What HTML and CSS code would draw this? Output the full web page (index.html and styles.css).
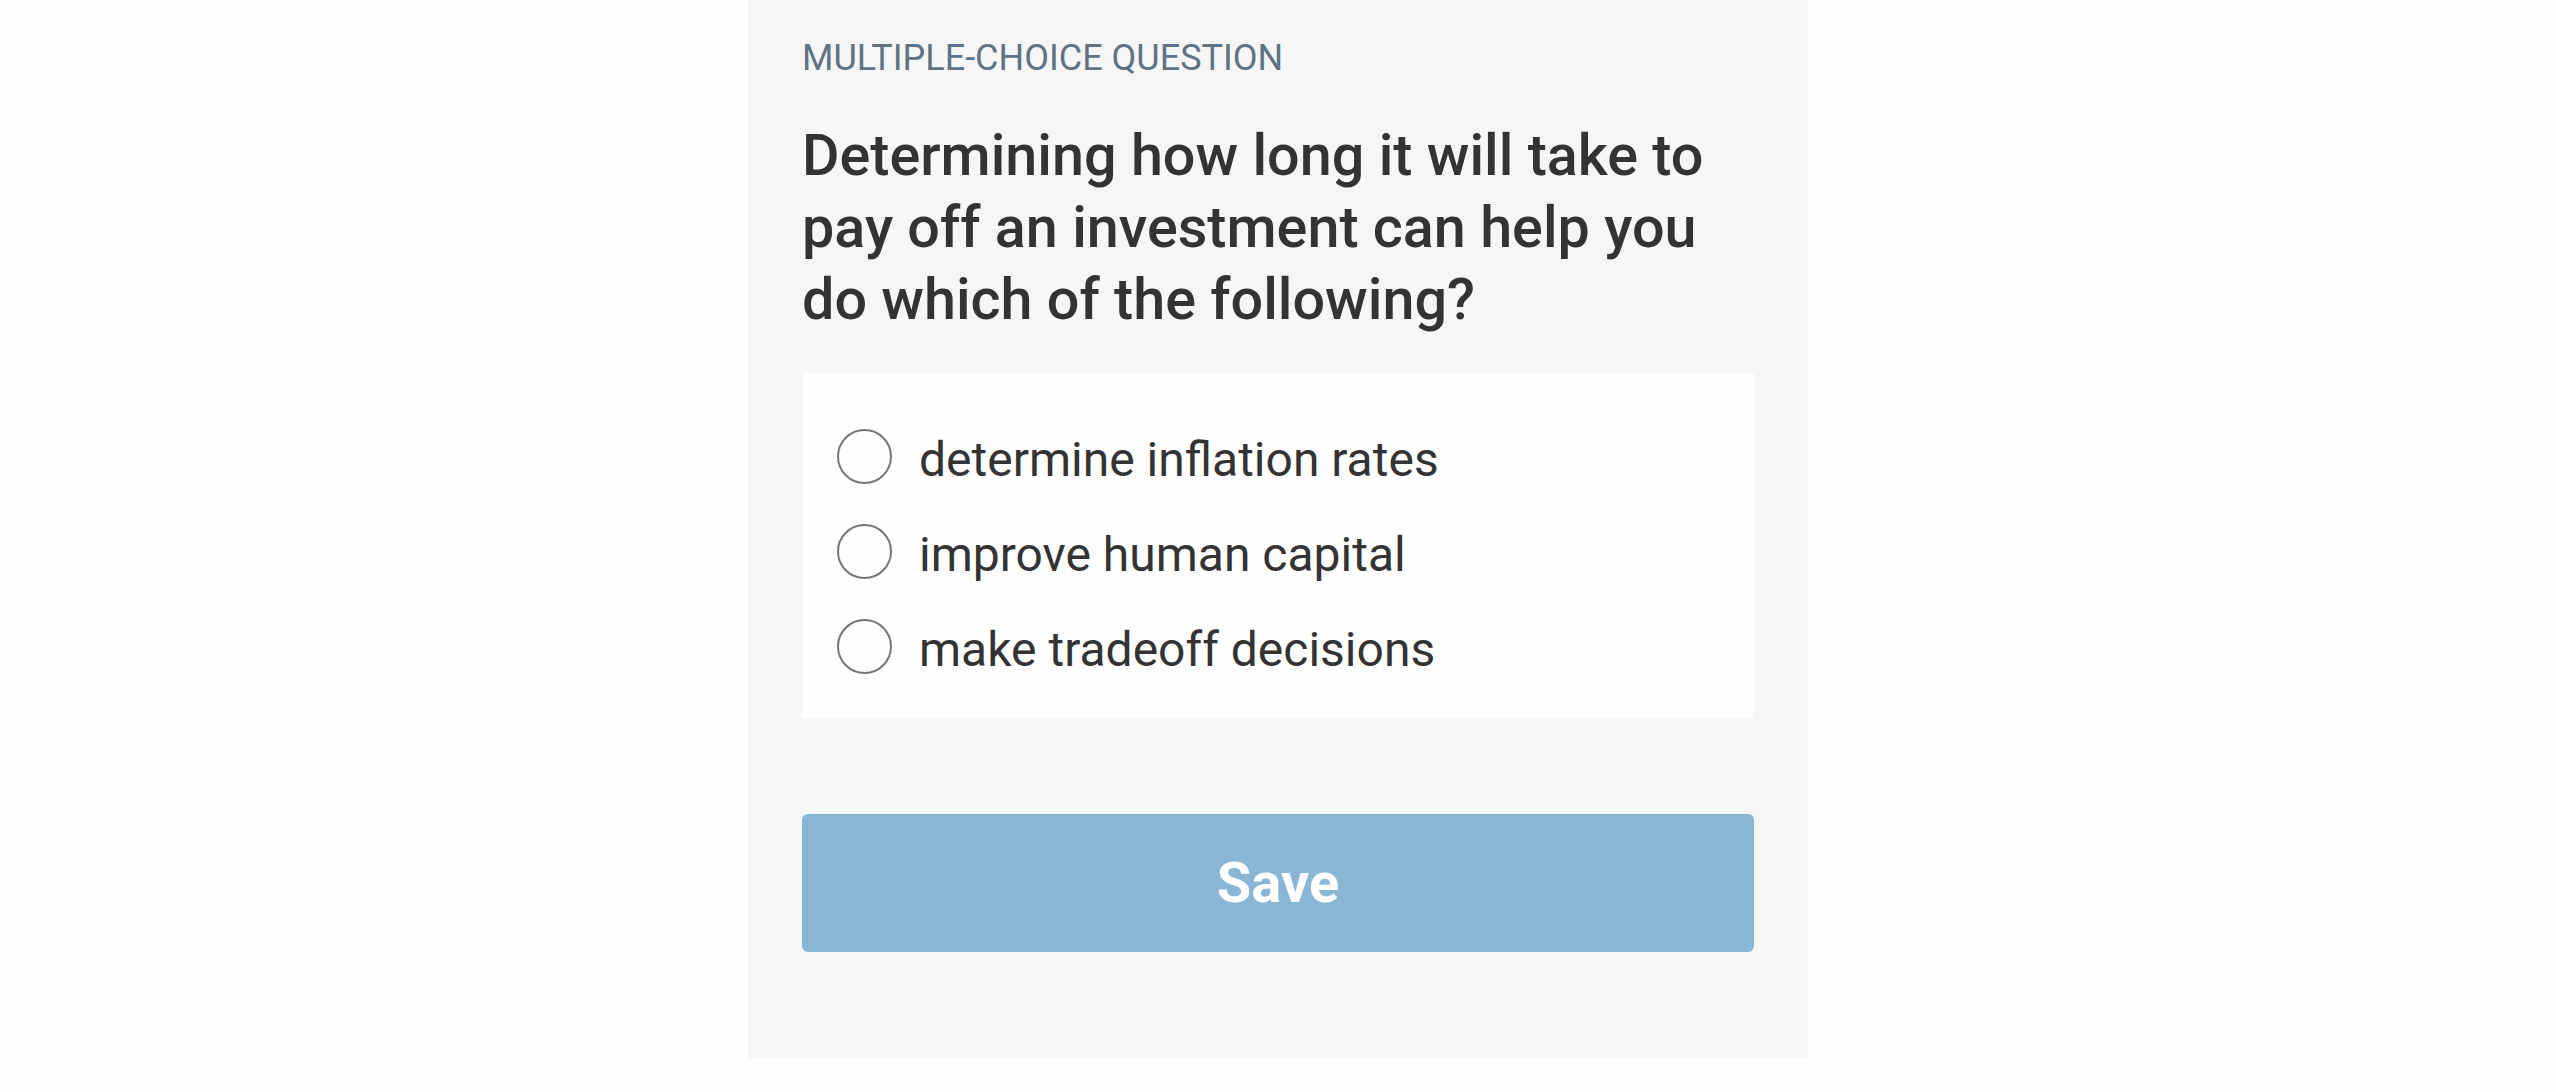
FILE: index.html
```html
<!DOCTYPE html>
<html lang="en">
<head>
    <meta charset="UTF-8">
    <meta name="viewport" content="width=device-width, initial-scale=1.0">
    <title>Multiple-choice question</title>
    <link rel="stylesheet" href="styles.css">
</head>
<body>
    <main class="question-card">
        <div class="question-type">Multiple-choice question</div>
        <h1 class="question-text">Determining how long it will take to pay off an investment can help you do which of the following?</h1>
        <form class="options" onsubmit="return false;">
            <label class="option">
                <input type="radio" name="answer" value="a">
                <span>determine inflation rates</span>
            </label>
            <label class="option">
                <input type="radio" name="answer" value="b">
                <span>improve human capital</span>
            </label>
            <label class="option">
                <input type="radio" name="answer" value="c">
                <span>make tradeoff decisions</span>
            </label>
        </form>
        <button class="save-button" type="button">Save</button>
    </main>
</body>
</html>
```

FILE: styles.css
```css
body {
    font-family: Roboto, "Liberation Sans", Arial, sans-serif;
    margin: 0;
    padding: 0;
    background-color: #fefefe;
    color: #333333;
}
.question-card {
    width: 952px;
    margin: 0 auto;
    padding: 38px 54px 106px;
    background-color: #f6f6f6;
}
.question-type {
    font-size: 36px;
    line-height: 40px;
    text-transform: uppercase;
    color: #5f7384;
}
.question-text {
    margin: 42px 0 37px;
    font-size: 57.5px;
    line-height: 72px;
    font-weight: 500;
    color: #333333;
}
.options {
    margin: 0;
    padding: 39px 35px 21px;
    background-color: #fefefe;
}
.option {
    display: flex;
    align-items: center;
    height: 95px;
    font-size: 48px;
    color: #333333;
    cursor: pointer;
}
.option input {
    appearance: none;
    -webkit-appearance: none;
    width: 55px;
    height: 55px;
    margin: 0 27px 6px 0;
    border: 2px solid #767676;
    border-radius: 50%;
    background-color: transparent;
    flex-shrink: 0;
    cursor: pointer;
}
.save-button {
    display: block;
    width: 100%;
    height: 138px;
    margin-top: 96px;
    font-family: inherit;
    font-size: 56px;
    font-weight: bold;
    color: white;
    background-color: #8ab6d6;
    border: none;
    border-radius: 6px;
    cursor: pointer;
}
```
